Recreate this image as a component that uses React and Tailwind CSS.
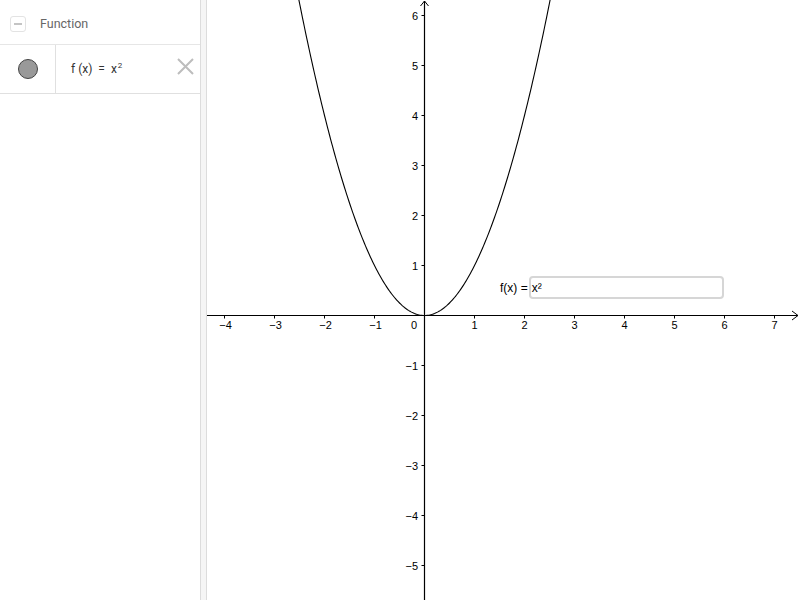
import React from "react";

const UNIT = 50;
const OX = 424.5;
const OY = 315.5;

function parabolaPath() {
  const pts = [];
  for (let u = -2.56; u <= 2.561; u += 0.02) {
    const px = OX + u * UNIT;
    const py = OY - u * u * UNIT;
    pts.push(`${px.toFixed(2)},${py.toFixed(2)}`);
  }
  return "M" + pts.join(" L");
}

const xs = [-4, -3, -2, -1, 1, 2, 3, 4, 5, 6, 7];
const ys = [6, 5, 4, 3, 2, 1, -1, -2, -3, -4, -5];
const lbl = (n) => (n < 0 ? `\u2212${-n}` : `${n}`);

function Graph() {
  return (
    <svg className="absolute inset-0" width="593" height="600" viewBox="207 0 593 600">
      {/* axes */}
      <line x1="207" y1={OY} x2="798" y2={OY} stroke="#000" strokeWidth="1" />
      <polyline points={`792,${OY - 4.5} 798,${OY} 792,${OY + 4.5}`} fill="none" stroke="#000" strokeWidth="1" />
      <line x1={OX} y1="1" x2={OX} y2="600" stroke="#000" strokeWidth="1.2" />
      <polyline points={`${OX - 4},6 ${OX},1 ${OX + 4},6`} fill="none" stroke="#000" strokeWidth="1" />

      <g fontFamily="'Liberation Sans', Arial, sans-serif" fontSize="11" fill="#000">
        {xs.map((n) => {
          const x = OX + n * UNIT;
          return (
            <g key={"x" + n}>
              <line x1={x} y1={OY} x2={x} y2={OY + 3} stroke="#000" strokeWidth="1" />
              <text x={x + (n < 0 ? 1 : 0)} y="328.5" textAnchor="middle">{lbl(n)}</text>
            </g>
          );
        })}
        <text x="414" y="328.5" textAnchor="middle">0</text>
        {ys.map((n) => {
          const y = OY - n * UNIT;
          return (
            <g key={"y" + n}>
              <line x1={OX - 3} y1={y} x2={OX} y2={y} stroke="#000" strokeWidth="1" />
              <text x="418" y={y + 4} textAnchor="end">{lbl(n)}</text>
            </g>
          );
        })}
      </g>

      <path d={parabolaPath()} fill="none" stroke="#000" strokeWidth="1.1" />
    </svg>
  );
}

export default function App() {
  return (
    <div className="flex w-[800px] h-[600px] bg-white overflow-hidden font-['Roboto',sans-serif]">
      {/* algebra view */}
      <div className="w-[200px] shrink-0 flex flex-col">
        <div className="h-[45px] pt-[4px] flex items-center border-b border-[#e6e6e6]">
          <div className="ml-[10px] w-[16px] h-[16px] rounded-[3px] border border-[#e3e3e3] flex items-center justify-center">
            <div className="w-[8px] h-[1.5px] bg-[#c4c4c4]" />
          </div>
          <span className="ml-[14px] text-[12.5px] text-[#666]">Function</span>
        </div>
        <div className="h-[49px] flex border-b border-[#e0e0e0]">
          <div className="w-[56px] shrink-0 border-r border-[#e0e0e0] flex items-center justify-center">
            <div className="w-[20px] h-[20px] rounded-full bg-[#999] border border-[#444]" />
          </div>
          <div className="flex-1 flex items-center pl-[15px] text-[12px] text-[#333]">
            <span className="whitespace-pre">f (x)  =  x</span>
            <sup className="text-[8px] relative -top-[3px] ml-[1px]">2</sup>
          </div>
          <div className="w-[28px] flex items-start justify-center pt-[13px] pr-[2px]">
            <svg width="17" height="17" viewBox="0 0 17 17">
              <path d="M1 1 L16 16 M16 1 L1 16" stroke="#bdbdbd" strokeWidth="2" />
            </svg>
          </div>
        </div>
      </div>

      {/* splitter */}
      <div className="w-[7px] shrink-0 bg-[#f5f5f5] border-x border-[#dcdcdc]" />

      {/* graphics view */}
      <div className="relative flex-1">
        <Graph />
        <div className="absolute left-[293px] top-[276px] flex items-center font-['Liberation_Sans',Arial,sans-serif] text-[12px] text-black">
          <span className="mr-[1px]">f(x) =</span>
          <div className="w-[195px] h-[23px] rounded-[4px] border-2 border-[#d6d6d6] flex items-center pl-[1px]">
            x²
          </div>
        </div>
      </div>
    </div>
  );
}
